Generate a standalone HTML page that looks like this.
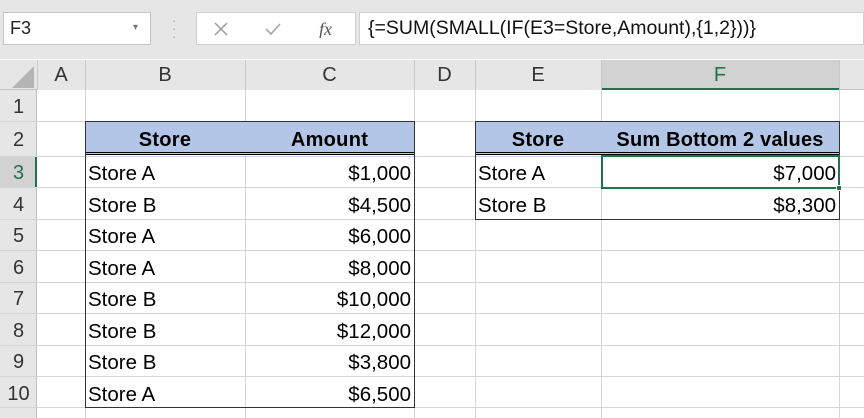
<!DOCTYPE html>
<html><head><style>
body{margin:0;width:864px;height:418px;overflow:hidden;background:#fff;font-family:"Liberation Sans",sans-serif;position:relative}
div{position:absolute;box-sizing:border-box}
.t{white-space:nowrap;font-size:20.5px;color:#000;line-height:31px;margin-top:2px}
.b{font-weight:bold;font-size:20px;letter-spacing:0.3px}
.hd{background:#e6e6e6;color:#333;font-size:20px;text-align:center;line-height:30px}
.vl{width:1px;background:#d4d4d4}
.hl{height:1px;background:#d4d4d4}
.rn{left:0;width:37px;text-align:center;color:#333;font-size:20px}
</style></head><body>
<div style="left:0;top:0;width:864px;height:59px;background:#e6e6e6"></div>
<div style="left:3px;top:12px;width:148px;height:33px;background:#fff;border:1px solid #c6c6c6;font-size:18px;line-height:31px;padding-left:6px;color:#222">F3</div>
<div style="left:133px;top:14px;font-size:10px;color:#777;line-height:28px">▾</div>
<div style="left:172px;top:16px;font-size:14px;color:#aaa;line-height:8px;width:4px">·<br>·<br>·</div>
<div style="left:196px;top:12px;width:160px;height:33px;background:#fff;border:1px solid #d0d0d0"></div>
<svg style="position:absolute;left:212px;top:20px" width="140" height="18"><path d="M3 3 L15 15 M15 3 L3 15" stroke="#999" stroke-width="1.5" fill="none"/><path d="M54 9 L59 14 L68 4" stroke="#aaa" stroke-width="1.7" fill="none"/><text x="107" y="15" font-family="Liberation Serif" font-style="italic" font-size="18" fill="#555">fx</text></svg>
<div style="left:359px;top:12px;width:505px;height:33px;background:#fff;border:1px solid #d0d0d0;font-size:19.5px;line-height:31px;padding-left:8px;color:#111">{=SUM(SMALL(IF(E3=Store,Amount),{1,2}))}</div>
<div class="hd" style="left:0;top:60px;width:864px;height:30px;border-bottom:1px solid #c0c0c0"></div>
<div class="hd" style="left:601px;top:60px;width:238px;height:30px;background:#d2d2d2;border-bottom:2px solid #217346;color:#217346">F</div>
<svg style="position:absolute;left:12px;top:66px" width="22" height="22"><path d="M22 0 L22 22 L0 22 Z" fill="#b4b4b4"/></svg>
<div class="hd" style="left:37px;top:60px;width:48px">A</div>
<div class="hd" style="left:85px;top:60px;width:160px">B</div>
<div class="hd" style="left:245px;top:60px;width:169px">C</div>
<div class="hd" style="left:414px;top:60px;width:61px">D</div>
<div class="hd" style="left:475px;top:60px;width:126px">E</div>
<div style="left:37px;top:60px;width:1px;height:30px;background:#c8c8c8"></div>
<div style="left:85px;top:60px;width:1px;height:30px;background:#c8c8c8"></div>
<div style="left:245px;top:60px;width:1px;height:30px;background:#c8c8c8"></div>
<div style="left:414px;top:60px;width:1px;height:30px;background:#c8c8c8"></div>
<div style="left:475px;top:60px;width:1px;height:30px;background:#c8c8c8"></div>
<div style="left:601px;top:60px;width:1px;height:30px;background:#c8c8c8"></div>
<div style="left:839px;top:60px;width:1px;height:30px;background:#c8c8c8"></div>
<div style="left:0;top:90px;width:37px;height:328px;background:#e6e6e6;border-right:1px solid #c0c0c0"></div>
<div style="left:0;top:156px;width:37px;height:31px;background:#d2d2d2;border-right:2px solid #217346"></div>
<div class="vl" style="left:85px;top:90px;height:328px"></div>
<div class="vl" style="left:245px;top:90px;height:328px"></div>
<div class="vl" style="left:414px;top:90px;height:328px"></div>
<div class="vl" style="left:475px;top:90px;height:328px"></div>
<div class="vl" style="left:601px;top:90px;height:328px"></div>
<div class="vl" style="left:839px;top:90px;height:328px"></div>
<div class="hl" style="left:0;top:121px;width:864px"></div>
<div class="hl" style="left:0;top:156px;width:864px"></div>
<div class="hl" style="left:0;top:187px;width:864px"></div>
<div class="hl" style="left:0;top:219px;width:864px"></div>
<div class="hl" style="left:0;top:250px;width:864px"></div>
<div class="hl" style="left:0;top:282px;width:864px"></div>
<div class="hl" style="left:0;top:313px;width:864px"></div>
<div class="hl" style="left:0;top:345px;width:864px"></div>
<div class="hl" style="left:0;top:376px;width:864px"></div>
<div class="hl" style="left:0;top:407px;width:864px"></div>
<div class="t rn" style="top:90px">1</div>
<div class="t rn" style="top:123px">2</div>
<div class="t rn" style="top:156px;color:#217346">3</div>
<div class="t rn" style="top:188px">4</div>
<div class="t rn" style="top:219px">5</div>
<div class="t rn" style="top:251px">6</div>
<div class="t rn" style="top:282px">7</div>
<div class="t rn" style="top:314px">8</div>
<div class="t rn" style="top:345px">9</div>
<div class="t rn" style="top:377px">10</div>
<div style="left:85px;top:121px;width:330px;height:34px;background:#b4c6e7;border:1px solid #333;border-bottom:3px double #000"></div>
<div style="left:85px;top:121px;width:330px;height:287px;border:1px solid #333"></div>
<div class="t b" style="left:85px;width:160px;text-align:center;top:123px">Store</div>
<div class="t b" style="left:245px;width:169px;text-align:center;top:123px">Amount</div>
<div class="t" style="left:88px;top:156px">Store A</div><div class="t" style="left:245px;width:166px;text-align:right;top:156px">$1,000</div>
<div class="t" style="left:88px;top:188px">Store B</div><div class="t" style="left:245px;width:166px;text-align:right;top:188px">$4,500</div>
<div class="t" style="left:88px;top:219px">Store A</div><div class="t" style="left:245px;width:166px;text-align:right;top:219px">$6,000</div>
<div class="t" style="left:88px;top:251px">Store A</div><div class="t" style="left:245px;width:166px;text-align:right;top:251px">$8,000</div>
<div class="t" style="left:88px;top:282px">Store B</div><div class="t" style="left:245px;width:166px;text-align:right;top:282px">$10,000</div>
<div class="t" style="left:88px;top:314px">Store B</div><div class="t" style="left:245px;width:166px;text-align:right;top:314px">$12,000</div>
<div class="t" style="left:88px;top:345px">Store B</div><div class="t" style="left:245px;width:166px;text-align:right;top:345px">$3,800</div>
<div class="t" style="left:88px;top:377px">Store A</div><div class="t" style="left:245px;width:166px;text-align:right;top:377px">$6,500</div>
<div style="left:475px;top:121px;width:365px;height:34px;background:#b4c6e7;border:1px solid #333;border-bottom:3px double #000"></div>
<div style="left:475px;top:121px;width:365px;height:99px;border:1px solid #333"></div>
<div class="t b" style="left:475px;width:126px;text-align:center;top:123px">Store</div>
<div class="t b" style="left:601px;width:238px;text-align:center;top:123px;letter-spacing:0.2px">Sum Bottom 2 values</div>
<div class="t" style="left:478px;top:156px">Store A</div><div class="t" style="left:601px;width:235px;text-align:right;top:156px">$7,000</div>
<div class="t" style="left:478px;top:188px">Store B</div><div class="t" style="left:601px;width:235px;text-align:right;top:188px">$8,300</div>
<div style="left:601px;top:155px;width:239px;height:34px;border:2px solid #217346"></div>
<div style="left:836px;top:185px;width:6px;height:6px;background:#217346;border:1px solid #fff"></div>
</body></html>
